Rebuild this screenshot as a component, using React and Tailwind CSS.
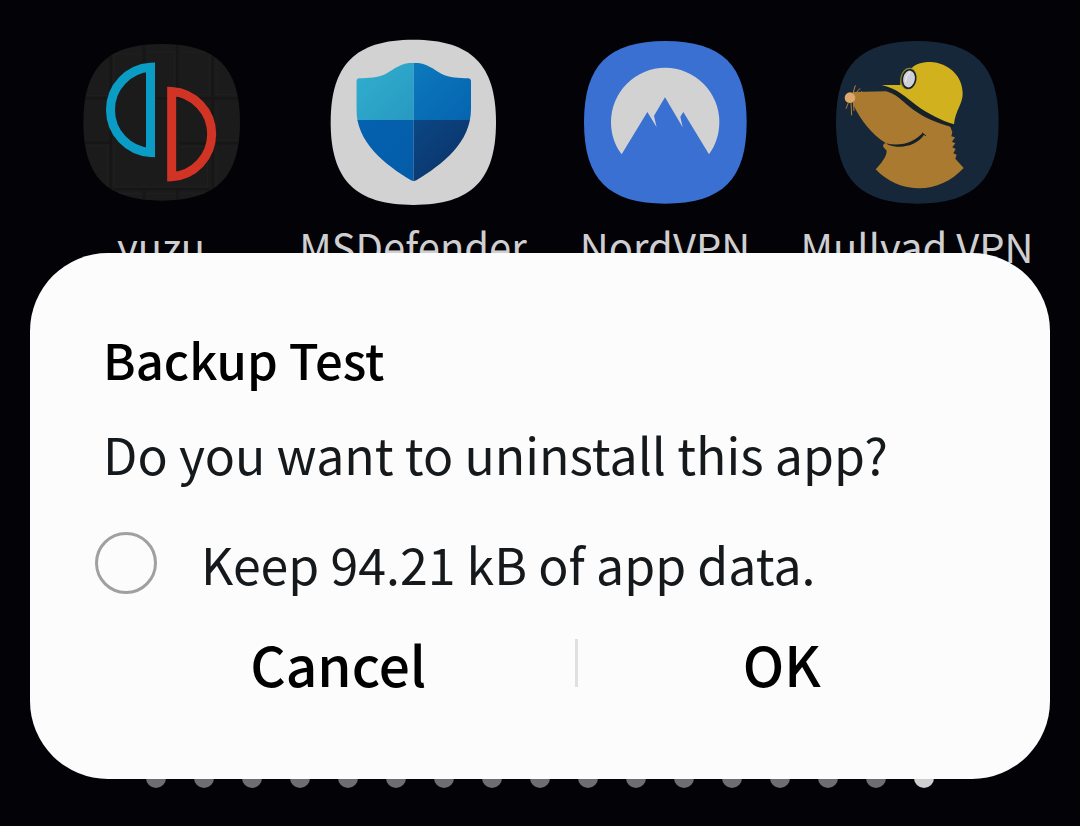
import React, { useState } from "react";

const squirclePath = (cx, r) => {
  const cy = 277;
  const k = r * 0.7;
  return `M${cx} ${cy - r}C${cx + k} ${cy - r} ${cx + r} ${cy - k} ${cx + r} ${cy}S${cx + k} ${cy + r} ${cx} ${cy + r}S${cx - r} ${cy + k} ${cx - r} ${cy}S${cx - k} ${cy - r} ${cx} ${cy - r}Z`;
};

function Squircle({ cx, r, fill }) {
  return <path d={squirclePath(cx, r)} fill={fill} />;
}

function YuzuIcon() {
  return (
    <svg viewBox="21 24 504 504" className="size-[168px]" aria-hidden="true">
      <defs>
        <clipPath id="yuzu-shape">
          <path d={squirclePath(275, 235)} />
        </clipPath>
      </defs>
      <Squircle cx={275} r={235} fill="#1b1b1b" />
      {/* faint console grid behind the logo */}
      <g clipPath="url(#yuzu-shape)" fill="none">
        <path
          d="M122 60V490M222 46V98M322 46V180M428 60V490M40 205H110M258 205H510M40 338H120M330 340H510M132 478H420M222 482V515M322 482V515"
          stroke="#161616"
          strokeWidth="7"
        />
        <path
          d="M132 72V196H50M132 72H214M232 66H314V190M334 66H418V194H334M438 72V194H500M438 215V330H505M438 350V480M50 348H112V480M132 346V470H412V350H334M132 490H214M232 490H314M334 490H420"
          stroke="#212121"
          strokeWidth="3"
        />
      </g>
      <path d="M241.500 112V367.500A128 128 0 0 1 241.500 112Z" fill="none" stroke="#0a9cc4" strokeWidth="27" />
      <path d="M305 184.500V440A128 128 0 0 0 305 184.500Z" fill="none" stroke="#d13425" strokeWidth="27" />
    </svg>
  );
}

function DefenderIcon() {
  return (
    <svg viewBox="57 24 504 504" className="size-[168px]" aria-hidden="true">
      <defs>
        <clipPath id="shield">
          <path d="M311 98C350 98 371 118 394 131C420 144 446 143 474 145Q483 146 483 154V236C483 338 398 402 319 451Q311 456 303 451C224 402 139 338 139 236V154Q139 146 148 145C176 143 202 144 228 131C251 118 272 98 311 98Z" />
        </clipPath>
        <linearGradient id="tl" x1="0" y1="0" x2="1" y2="1">
          <stop offset="0" stopColor="#31b0cf" />
          <stop offset="1" stopColor="#2899c2" />
        </linearGradient>
        <linearGradient id="tr" x1="0" y1="0" x2="1" y2="1">
          <stop offset="0" stopColor="#0c7abc" />
          <stop offset="1" stopColor="#0563b0" />
        </linearGradient>
        <linearGradient id="bl" x1="0" y1="0" x2="1" y2="1">
          <stop offset="0" stopColor="#0462b0" />
          <stop offset="1" stopColor="#045ca8" />
        </linearGradient>
        <linearGradient id="br" x1="0" y1="0" x2="1" y2="1">
          <stop offset="0" stopColor="#0b4785" />
          <stop offset="1" stopColor="#0c2f63" />
        </linearGradient>
      </defs>
      <Squircle cx={310} r={248} fill="#d2d2d3" />
      <g clipPath="url(#shield)">
        <path d="M130 90H311V270H130Z" fill="url(#tl)" />
        <path d="M311 90H490V270H311Z" fill="url(#tr)" />
        <path d="M130 270H311V460H130Z" fill="url(#bl)" />
        <path d="M311 270H490V460H311Z" fill="url(#br)" />
      </g>
    </svg>
  );
}

function NordIcon() {
  return (
    <svg viewBox="33 24 504 504" className="size-[168px]" aria-hidden="true">
      <Squircle cx={286} r={244} fill="#3a70d2" />
      <path
        d="M155 373C134 346 123 312 123 276A162 162 0 0 1 448 276C448 312 437 346 417 373L340 246L331 260L338 292L285 202L252 257L260 292L232 246Z"
        fill="#d2d2d3"
      />
    </svg>
  );
}

function MullvadIcon() {
  return (
    <svg viewBox="39 24 504 504" className="size-[168px]" aria-hidden="true">
      <Squircle cx={292} r={244} fill="#152739" />
      <path
        d="M98 186L198 184C240 196 262 226 300 247C330 264 362 270 391 290L397 307L394 319L405 322L396 335L406 340L397 352L407 357L400 370L410 374L406 386L431 414C394 454 345 476 294 475C244 474 200 453 167 418C182 400 200 382 200 362L190 351C188 344 192 340 197 339C154 312 122 270 100 224Z"
        fill="#a97a2f"
      />
      <path d="M197 340C245 352 285 334 308 309L313 313C291 348 243 358 205 344Z" fill="#152129" />
      <path d="M306 308Q311 314 318 317" fill="none" stroke="#152129" strokeWidth="3" />
      <path d="M188 166C228 171 254 204 291 228C326 251 365 267 402 279L399 292C352 280 312 262 280 239C252 219 228 190 188 170Z" fill="#172128" />
      <path
        d="M185 165L241 165C240 138 251 116 276 113C289 101 310 96 331 96C386 98 428 139 428 189C429 222 406 240 402 283C363 271 324 251 291 227C257 202 235 177 185 165Z"
        fill="#d1b11e"
      />
      <ellipse cx="265" cy="146" rx="24" ry="33" fill="#8c8622" transform="rotate(10 265 146)" />
      <ellipse cx="267" cy="147" rx="20" ry="28" fill="#d0d1d8" stroke="#17212c" strokeWidth="5" transform="rotate(10 267 147)" />
      <path d="M256 156Q259 135 270 126" fill="none" stroke="#f0f1f5" strokeWidth="3" />
      <circle cx="90" cy="203" r="16" fill="#dfa86c" />
      <path d="M99 190L106 166M102 196L120 175M104 203L126 184M86 216L78 236M93 218L95 256M100 214L102 243" fill="none" stroke="#b4813d" strokeWidth="3" />
    </svg>
  );
}

const apps = [
  { name: "yuzu", Icon: YuzuIcon },
  { name: "MSDefender", Icon: DefenderIcon },
  { name: "NordVPN", Icon: NordIcon },
  { name: "Mullvad VPN", Icon: MullvadIcon },
];

const PAGES = 17;

export default function App() {
  const [keepData, setKeepData] = useState(false);
  const [open, setOpen] = useState(true);

  return (
    <div className="relative flex min-h-screen flex-col overflow-hidden bg-[#020207] font-['Noto_Sans_CJK_JP','Noto_Sans',sans-serif]">
      <div className="grid grid-cols-4 pt-[38px] pr-[37px] pl-[35px]">
        {apps.map(({ name, Icon }) => (
          <div key={name} className="flex flex-col items-center">
            <Icon />
            <span className="mt-3.5 text-[40px] leading-[52px] whitespace-nowrap text-[#cfcfd1]">{name}</span>
          </div>
        ))}
      </div>

      <div className="mt-auto flex justify-center gap-7 pb-[38px]">
        {Array.from({ length: PAGES }, (_, i) => (
          <span
            key={i}
            className={i === PAGES - 1 ? "size-5 rounded-full bg-[#cfcfcf]" : "size-5 rounded-full bg-[#6e6e70]"}
          />
        ))}
      </div>

      {open && (
        <div
          role="dialog"
          aria-labelledby="dialog-title"
          className="absolute inset-x-[30px] bottom-[47px] rounded-[78px] bg-[#fcfcfc] px-[65px] pt-[68px] pb-[76px]"
        >
          <h1 id="dialog-title" className="pl-2 text-[49px] leading-[76px] font-medium text-black">
            Backup Test
          </h1>
          <p className="mt-[18px] pl-2 text-[50px] leading-[76px] whitespace-nowrap text-[#15191c]">
            Do you want to uninstall this app?
          </p>
          <label className="mt-[34px] flex items-center gap-11 text-[50px] leading-[76px] whitespace-nowrap text-[#15191c]">
            <input
              type="checkbox"
              checked={keepData}
              onChange={(e) => setKeepData(e.target.checked)}
              className="size-[62px] shrink-0 appearance-none rounded-full border-3 border-[#a0a0a0] checked:bg-[#a0a0a0]"
            />
            Keep 94.21 kB of app data.
          </label>
          <div className="mt-[22px] flex items-center pl-1.5 text-[55px] leading-[80px] font-medium text-black">
            <button type="button" className="flex-7" onClick={() => setOpen(false)}>
              Cancel
            </button>
            <span className="h-12 w-[3px] bg-[#e0e0e0]" />
            <button type="button" className="flex-6" onClick={() => setOpen(false)}>
              OK
            </button>
          </div>
        </div>
      )}
    </div>
  );
}
